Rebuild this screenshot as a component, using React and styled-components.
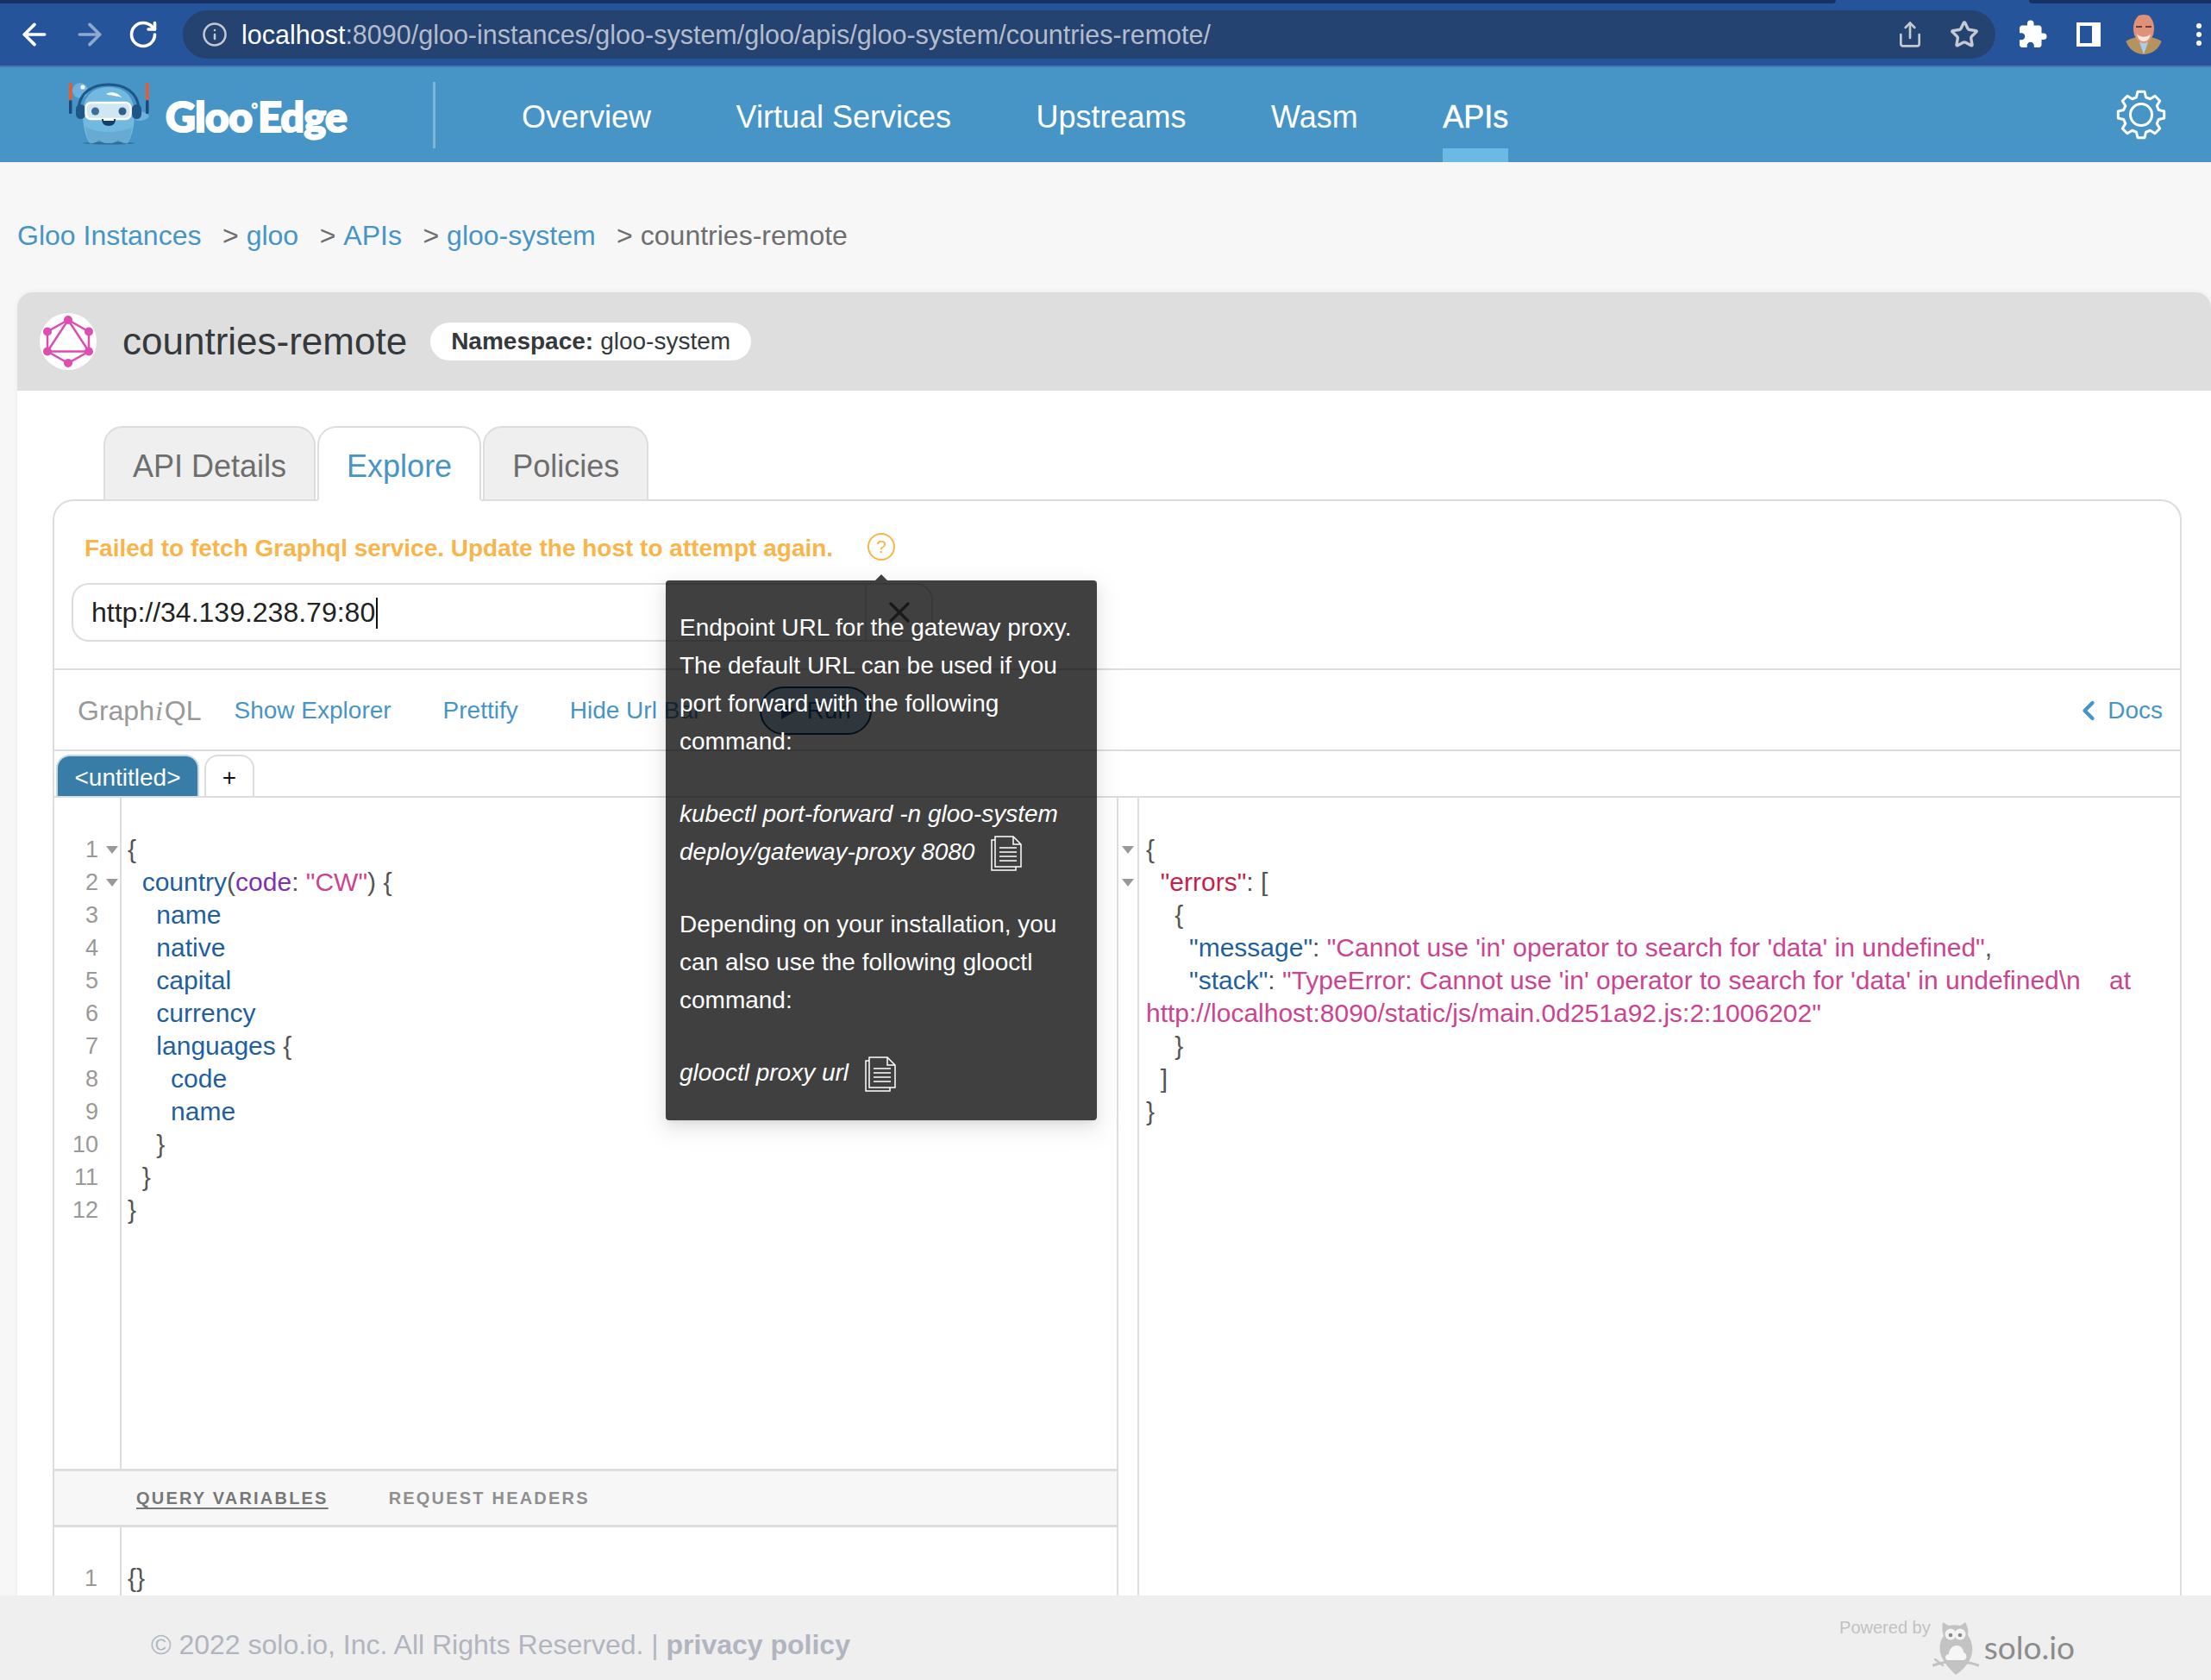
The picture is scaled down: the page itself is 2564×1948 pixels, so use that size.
import React from "react";
import styled, { createGlobalStyle } from "styled-components";
import { ArrowLeft, ArrowRight, RotateCw, Info, Share, Star, X, ChevronLeft } from "lucide-react";
import { MdExtension } from "react-icons/md";

const GlobalStyle = createGlobalStyle`
  * { box-sizing: border-box; }
  html, body { margin: 0; padding: 0; background: #f7f7f7; }
  body { font-family: "Liberation Sans", Arial, sans-serif; }
`;

const Page = styled.div`
  width: 2564px;
  height: 1948px;
  display: flex;
  flex-direction: column;
  overflow: hidden;
  background: #f7f7f7;
`;

/* browser chrome */
const ChromeBar = styled.div`
  position: relative;
  flex: none;
  height: 78px;
  background: #26549a;
  border-bottom: 2px solid #4a75ae;
  padding: 12px 0 8px;
  display: flex;
  align-items: stretch;
`;
const TabEdge = styled.div`
  position: absolute;
  top: 0;
  left: ${(p) => (p.$side === "left" ? "0" : "2353px")};
  width: ${(p) => (p.$side === "left" ? "2129px" : "211px")};
  height: 4px;
  background: #163163;
  border-radius: ${(p) => (p.$side === "left" ? "0 0 6px 0" : "0 0 0 6px")};
`;
const NavIcons = styled.div`
  width: 212px;
  display: flex;
  align-items: center;
  padding-left: 20px;
  gap: 24px;
  color: #fff;
`;
const Dimmed = styled.span`
  display: flex;
  color: #8ea8d0;
`;
const AddressPill = styled.div`
  width: 2102px;
  background: #244371;
  border-radius: 28px;
  display: flex;
  align-items: center;
  padding: 0 0 0 22px;
  color: #c4c9d2;
`;
const AddressText = styled.div`
  margin-left: 16px;
  font-size: 30.5px;
  color: #b4bccb;
  white-space: nowrap;
  flex: 1;
`;
const Host = styled.span`
  color: #fff;
`;
const PillIcons = styled.div`
  display: flex;
  align-items: center;
  gap: 30px;
  padding-right: 19px;
`;
const ExtIcons = styled.div`
  flex: 1;
  display: flex;
  align-items: center;
  color: #fff;
  padding-left: 25px;
`;
const SideSlot = styled.span`
  display: flex;
  margin: 0 28px 0 33px;
`;
const Dots = styled.div`
  margin-left: 39px;
  display: flex;
  flex-direction: column;
  gap: 4px;
`;
const Dot = styled.span`
  width: 6px;
  height: 6px;
  border-radius: 50%;
  background: #fff;
`;

/* app header */
const Header = styled.header`
  flex: none;
  height: 110px;
  background: #4795c6;
  display: flex;
  align-items: stretch;
  padding-left: 74px;
`;
const LogoBox = styled.div`
  width: 428px;
  display: flex;
  align-items: center;
  flex: none;
  padding-bottom: 4px;
`;
const LogoText = styled.div`
  margin-left: 8px;
  font-family: Lato, "Liberation Sans", sans-serif;
  font-weight: 900;
  font-size: 48px;
  letter-spacing: -0.5px;
  color: #fff;
  -webkit-text-stroke: 2.2px #fff;
  white-space: nowrap;
  line-height: 1;
  padding-top: 8px;
`;
const LogoMark = styled.sup`
  font-size: 18px;
  vertical-align: 20px;
  line-height: 0;
  margin: 0 1px 0 -1px;
  -webkit-text-stroke: 0.6px #fff;
`;
const HeaderDivider = styled.div`
  width: 3px;
  height: 77px;
  margin-top: 17px;
  background: #7fb5d9;
  flex: none;
`;
const Nav = styled.nav`
  display: flex;
  margin-left: 100px;
  gap: 98.5px;
  flex: 1;
`;
const NavItem = styled.a`
  font-size: 36px;
  line-height: 116px;
  color: #fff;
  position: relative;
  white-space: nowrap;
  ${(p) =>
    p.$active &&
    `-webkit-text-stroke: 0.5px #fff;
    &::after {
      content: "";
      position: absolute;
      left: 0;
      right: 0;
      top: 94px;
      height: 16px;
      background: #6cb9e6;
    }`}
`;
const GearBox = styled.div`
  flex: none;
  margin-right: 51px;
  margin-top: 25px;
`;

/* main */
const Main = styled.main`
  flex: 1;
  min-height: 0;
  overflow: hidden;
  padding: 64px 0 0 20px;
`;
const Breadcrumb = styled.div`
  display: flex;
  font-size: 32px;
  line-height: 42px;
  color: #6e6e6e;
  margin-bottom: 45px;
`;
const Crumb = styled.span`
  color: ${(p) => (p.$link ? "#4795c6" : "#6e6e6e")};
  margin-left: ${(p) => (p.$first ? "0" : "9px")};
`;
const Sep = styled.span`
  margin-left: ${(p) => p.$gap}px;
`;
const Card = styled.section`
  background: #fff;
  border-radius: 18px 18px 0 0;
  box-shadow: 0 0 6px rgba(0, 0, 0, 0.06);
`;
const CardHead = styled.div`
  height: 114px;
  background: #dedede;
  border-radius: 18px 18px 0 0;
  display: flex;
  align-items: center;
  padding-left: 26px;
`;
const IconCircle = styled.div`
  width: 66px;
  height: 66px;
  border-radius: 50%;
  background: #fff;
  display: flex;
  align-items: center;
  justify-content: center;
  flex: none;
`;
const Title = styled.h1`
  margin: 0 27px 0 30px;
  font-size: 44px;
  font-weight: 400;
  color: #35393b;
  white-space: nowrap;
`;
const NsPill = styled.div`
  height: 44px;
  padding: 0 24px;
  border-radius: 22px;
  background: #fff;
  display: flex;
  align-items: center;
  font-size: 28px;
  color: #35393b;
  white-space: nowrap;
  gap: 8px;
`;
const NsLabel = styled.b`
  font-weight: 700;
`;
const Tabs = styled.div`
  display: flex;
  gap: 2px;
  margin: 41px 0 -2px 100px;
  position: relative;
  z-index: 1;
`;
const Tab = styled.div`
  height: 87px;
  padding: 0 32px;
  font-size: 36px;
  line-height: 90px;
  border: 2px solid #ddd;
  border-bottom: ${(p) => (p.$active ? "2px solid #fff" : "2px solid #ddd")};
  border-radius: 22px 22px 0 0;
  background: ${(p) => (p.$active ? "#fff" : "#efefef")};
  color: ${(p) => (p.$active ? "#4795c6" : "#6e6e6e")};
  white-space: nowrap;
`;
const Panel = styled.div`
  position: relative;
  margin: 0 34px 0 41px;
  border: 2px solid #ddd;
  border-radius: 24px 24px 0 0;
  background: #fff;
`;
const WarnRow = styled.div`
  display: flex;
  align-items: center;
  height: 36px;
  margin: 37px 0 22px 35px;
`;
const WarnText = styled.div`
  font-size: 28px;
  font-weight: 700;
  color: #f9b54a;
  white-space: nowrap;
`;
const HelpIcon = styled.div`
  margin-left: 40px;
  margin-top: -4px;
  width: 32px;
  height: 32px;
  border: 2px solid #f9b54a;
  border-radius: 50%;
  color: #f9b54a;
  font-size: 21px;
  line-height: 28px;
  text-align: center;
`;
const UrlRow = styled.div`
  display: flex;
  margin: 0 0 31px 20px;
  height: 68px;
`;
const UrlInput = styled.div`
  width: 920px;
  height: 68px;
  border: 2px solid #ddd;
  border-right: 0;
  border-radius: 20px 0 0 20px;
  display: flex;
  align-items: center;
  padding-left: 21px;
  font-size: 32px;
  padding-top: 1px;
  color: #222;
`;
const Caret = styled.span`
  width: 2px;
  height: 36px;
  background: #111;
  margin-left: 1px;
`;
const UrlButton = styled.div`
  width: 79px;
  height: 68px;
  border: 2px solid #ddd;
  border-radius: 0 20px 20px 0;
  display: flex;
  align-items: center;
  justify-content: center;
  color: #666;
`;
const Toolbar = styled.div`
  height: 96px;
  border-top: 2px solid #ddd;
  border-bottom: 2px solid #ddd;
  display: flex;
  align-items: center;
  padding: 2px 20px 0 27px;
`;
const Brand = styled.div`
  font-size: 32px;
  color: #999;
  margin-right: 38px;
  white-space: nowrap;
`;
const BrandI = styled.em`
  font-family: "Liberation Serif", serif;
  margin: 0 2px 0 1px;
`;
const ToolLink = styled.a`
  font-size: 28px;
  color: #4795c6;
  margin-right: 60px;
  white-space: nowrap;
`;
const RunButton = styled.div`
  width: 130px;
  height: 56px;
  margin-left: 8px;
  border: 2px solid #0c3f66;
  border-radius: 28px;
  background: #bcdaee;
  display: flex;
  align-items: center;
  justify-content: center;
  gap: 12px;
  font-size: 28px;
  color: #1c5a86;
`;
const RunArrow = styled.span`
  width: 0;
  height: 0;
  border-left: 18px solid #1c5a86;
  border-top: 10px solid transparent;
  border-bottom: 10px solid transparent;
`;
const DocsLink = styled.a`
  margin-left: auto;
  display: flex;
  align-items: center;
  gap: 4px;
  font-size: 28px;
  color: #4795c6;
`;
const SessionStrip = styled.div`
  height: 54px;
  border-bottom: 2px solid #ddd;
  display: flex;
  align-items: flex-end;
  padding-left: 2px;
  gap: 6px;
`;
const SessionTab = styled.div`
  height: 48px;
  width: ${(p) => (p.$active ? "166px" : "58px")};
  text-align: center;
  border-radius: 16px 16px 0 0;
  border: 2px solid #ddd;
  border-bottom: 0;
  background: ${(p) => (p.$active ? "#387ca8" : "#fff")};
  border-color: ${(p) => (p.$active ? "#c5d8e4" : "#ddd")};
  color: ${(p) => (p.$active ? "#fff" : "#111")};
  font-size: 28px;
  line-height: 49px;
  white-space: nowrap;
`;
const Workspace = styled.div`
  display: flex;
  align-items: stretch;
`;
const LeftPane = styled.div`
  width: 1232px;
  flex: none;
`;
const EditorArea = styled.div`
  display: flex;
  height: ${(p) => p.$h}px;
  padding-top: 0;
`;
const Gutter = styled.div`
  width: 78px;
  flex: none;
  border-right: 2px solid #ddd;
  padding-top: ${(p) => p.$top}px;
  overflow: hidden;
`;
const GutterRow = styled.div`
  height: 38px;
  display: flex;
  align-items: center;
  justify-content: flex-end;
  font-size: 27px;
  color: #999;
  padding-right: ${(p) => p.$pad}px;
`;
const FoldSlot = styled.span`
  width: 14px;
  margin-left: 9px;
  flex: none;
`;
const Fold = styled.span`
  display: block;
  width: 0;
  height: 0;
  border-left: 7px solid transparent;
  border-right: 7px solid transparent;
  border-top: 9px solid #999;
`;
const Code = styled.div`
  flex: 1;
  min-width: 0;
  padding: ${(p) => p.$top}px 0 0 ${(p) => p.$left}px;
  font-size: 30px;
  color: #555;
`;
const CodeLine = styled.div`
  line-height: 38px;
  min-height: 38px;
  white-space: pre-wrap;
`;
const TOKEN = { p: "#1f5f9f", a: "#7f30b2", s: "#cc4490", d: "#c81f4a", x: "#555" };
const Tok = styled.span`
  color: ${(p) => TOKEN[p.$k]};
`;
const VarBar = styled.div`
  height: 68px;
  background: #f7f7f7;
  border-top: 3px solid #ddd;
  border-bottom: 3px solid #ddd;
  display: flex;
  align-items: center;
  padding: 1px 0 0 95px;
  gap: 70px;
`;
const VarTab = styled.div`
  font-size: 20px;
  font-weight: 700;
  letter-spacing: 2.2px;
  color: ${(p) => (p.$active ? "#777" : "#8f8f8f")};
  text-decoration: ${(p) => (p.$active ? "underline" : "none")};
  text-underline-offset: 4px;
  white-space: nowrap;
`;
const DragBar = styled.div`
  width: 26px;
  flex: none;
  border-left: 2px solid #ddd;
  border-right: 2px solid #ddd;
  padding-top: 41px;
  display: flex;
  flex-direction: column;
`;
const DragFold = styled.div`
  height: 38px;
  display: flex;
  align-items: center;
  justify-content: center;
`;
const ResultPane = styled.div`
  flex: 1;
  min-width: 0;
`;

/* tooltip */
const Tooltip = styled.div`
  position: absolute;
  top: 92px;
  left: 709px;
  width: 500px;
  padding: 33px 16px;
  border-radius: 4px;
  background: rgba(0, 0, 0, 0.75);
  box-shadow: 0 3px 6px -4px rgba(0, 0, 0, 0.12), 0 6px 16px rgba(0, 0, 0, 0.08),
    0 9px 28px 8px rgba(0, 0, 0, 0.05);
  color: #fff;
  font-size: 28px;
  line-height: 44px;
  z-index: 5;
  &::before {
    content: "";
    position: absolute;
    top: -7px;
    left: 243px;
    border-left: 7px solid transparent;
    border-right: 7px solid transparent;
    border-bottom: 7px solid rgba(0, 0, 0, 0.75);
  }
`;
const TipPara = styled.p`
  margin: 0 0 40px;
  &:last-child {
    margin-bottom: 0;
  }
`;
const TipCode = styled.i`
  font-style: italic;
`;
const CopyWrap = styled.span`
  display: inline-block;
  vertical-align: middle;
  margin-left: 19px;
  line-height: 0;
`;

/* footer */
const Footer = styled.footer`
  position: relative;
  z-index: 6;
  flex: none;
  height: 98px;
  background: #efefef;
  display: flex;
  align-items: center;
  justify-content: space-between;
  padding: 0 158px 0 175px;
`;
const FootText = styled.div`
  font-size: 32px;
  color: #b1b5bf;
  white-space: nowrap;
  margin-top: 16px;
`;
const FootStrong = styled.b`
  font-weight: 700;
`;
const Powered = styled.div`
  display: flex;
  align-items: flex-start;
  height: 98px;
`;
const PoweredLabel = styled.div`
  font-size: 20px;
  color: #c2c2c2;
  margin-top: 26px;
  white-space: nowrap;
`;
const OwlBox = styled.div`
  margin: 30px 6px 0 2px;
  line-height: 0;
`;
const SoloText = styled.div`
  font-family: Lato, "Open Sans", sans-serif;
  font-size: 37px;
  font-weight: 400;
  color: #8c8c8c;
  margin-top: 37px;
  line-height: 46px;
`;

/* drawings */
const Mascot = () => (
  <svg width="110" height="78" viewBox="75 93 110 78" aria-hidden="true">
    <ellipse cx="127" cy="167" rx="30" ry="1.5" fill="#2f6f9d" />
    <circle cx="94" cy="106" r="9" fill="#6cb2dc" />
    <circle cx="97" cy="102" r="2.6" fill="#fff" />
    <path d="M160 130c8 0 12 2 14 6-4 5-10 6-16 4z" fill="#6cb2dc" />
    <path d="M97 134c0-22 12-32 30-32s30 10 30 32c0 14-4 28-8 33-5 1-8-2-11-4-3 3-7 4-11 4s-8-1-11-4c-3 2-6 5-11 4-4-5-8-19-8-33z" fill="#72b9df" />
    <path d="M100 148c8 4 18 6 27 6s20-2 27-6c-1 8-3 15-5 19-5 1-8-2-11-4-3 3-7 4-11 4s-8-1-11-4c-3 2-6 5-11 4-2-4-4-11-5-19z" fill="#67abd2" />
    <path d="M92 126c2-18 16-27 35-27s33 9 35 27" fill="none" stroke="#1f5688" strokeWidth="3" />
    <rect x="89" y="122" width="11" height="17" rx="5.500" fill="#1f5688" />
    <rect x="154" y="122" width="11" height="17" rx="5.500" fill="#1f5688" />
    <path d="M124 110c4-3 14-2 18 4-5-2-13-2-18-4z" fill="#fff" />
    <rect x="100.500" y="120" width="52" height="19" rx="6" fill="#cfe6f3" stroke="#fff" strokeWidth="2.500" />
    <circle cx="111.500" cy="130" r="4.500" fill="#3f6f96" />
    <circle cx="143" cy="130" r="4.500" fill="#2f6088" />
    <path d="M119 139h16c0 5-3 8-8 8s-8-3-8-8z" fill="#123f68" />
    <path d="M121 139h12v2h-12z" fill="#fff" />
    <rect x="81" y="97" width="3.500" height="20" rx="1.500" fill="#ef5a28" />
    <rect x="81" y="117" width="3.500" height="16" rx="1.500" fill="#1c4a78" />
    <rect x="170" y="97" width="3.500" height="20" rx="1.500" fill="#ef5a28" />
    <rect x="170" y="117" width="3.500" height="16" rx="1.500" fill="#1c4a78" />
  </svg>
);

const gearPath = () => {
  const cx = 30;
  const cy = 30;
  const teeth = 8;
  const pts = [];
  for (let i = 0; i < teeth; i++) {
    const a = (i / teeth) * Math.PI * 2 - Math.PI / 2;
    const step = (Math.PI * 2) / teeth;
    const list = [
      [21, a - step * 0.34],
      [27, a - step * 0.19],
      [27, a + step * 0.19],
      [21, a + step * 0.34],
    ];
    list.forEach(([r, t]) => pts.push(`${(cx + r * Math.cos(t)).toFixed(2)} ${(cy + r * Math.sin(t)).toFixed(2)}`));
  }
  return `M${pts.join("L")}Z`;
};

const Gear = () => (
  <svg width="60" height="60" viewBox="0 0 60 60" fill="none" stroke="#fff" strokeWidth="3" strokeLinejoin="round" aria-hidden="true">
    <path d={gearPath()} />
    <circle cx="30" cy="30" r="12.500" />
  </svg>
);

const GraphqlIcon = () => (
  <svg width="58" height="62" viewBox="0 0 58 62" fill="none" stroke="#de4eb0" strokeWidth="2.500" aria-hidden="true">
    <path d="M29 6L53 19.500V42.500L29 56L5 42.500V19.500Z" />
    <path d="M29 6L53 42.500H5Z" />
    <g fill="#de4eb0" stroke="none">
      <circle cx="29" cy="6" r="5" />
      <circle cx="53" cy="19.500" r="5" />
      <circle cx="53" cy="42.500" r="5" />
      <circle cx="29" cy="56" r="5" />
      <circle cx="5" cy="42.500" r="5" />
      <circle cx="5" cy="19.500" r="5" />
    </g>
  </svg>
);

const CopyIcon = () => (
  <svg width="36" height="41" viewBox="0 0 36 41" fill="none" stroke="#fff" strokeWidth="1.500" aria-hidden="true">
    <path d="M5 5H1V40H29V36" />
    <path d="M5 1H26L35 10V36H5Z" />
    <path d="M26 1V10H35" />
    <path d="M10 14H30M10 19H30M10 24H30M10 29H30" />
  </svg>
);

const SidePanelIcon = () => (
  <svg width="28" height="28" viewBox="0 0 28 28" aria-hidden="true">
    <path fillRule="evenodd" fill="#fff" d="M0 0H28V28H0ZM4 4V24H18V4Z" />
  </svg>
);

const Avatar = () => (
  <svg width="44" height="46" viewBox="0 0 44 46" aria-hidden="true">
    <defs>
      <clipPath id="avatar-clip">
        <ellipse cx="22" cy="23" rx="22" ry="23" />
      </clipPath>
    </defs>
    <g clipPath="url(#avatar-clip)">
      <rect width="44" height="46" fill="#26549a" />
      <path d="M0 46V32c6-5 12-6 22-6s16 1 22 6v14z" fill="#b5935f" />
      <path d="M17 32l5 14 5-14z" fill="#a9cdea" />
      <ellipse cx="22" cy="16" rx="12" ry="17" fill="#e0917a" />
      <path d="M14 22c3 5 13 5 16 0-1 6-4 9-8 9s-7-3-8-9z" fill="#f4e6dc" />
      <rect x="13" y="13" width="7" height="2" fill="#6b3d33" />
      <rect x="24" y="13" width="7" height="2" fill="#6b3d33" />
    </g>
  </svg>
);

const Owl = () => (
  <svg width="54" height="62" viewBox="0 0 54 62" aria-hidden="true">
    <path d="M12 1c3 2 5 3 7 4 4-1 9-1 13 0 2-1 4-2 6-4 3 5 4 11 3 15 4 5 6 13 5 20-1 8-7 18-19 26-7-7-12-12-16-20-4-9-3-19 2-25-2-5-2-10-1-16z" fill="#c3c3c3" />
    <circle cx="21" cy="15" r="6.500" fill="#f4f4f4" />
    <circle cx="32" cy="15" r="6.500" fill="#f4f4f4" />
    <circle cx="21" cy="16" r="2.300" fill="#8a8a8a" />
    <circle cx="32" cy="16" r="2.300" fill="#8a8a8a" />
    <path d="M18 45c-4 0-4-7 1-7 0-5 4-10 9-10s8 4 8 8c4 0 5 9 0 9z" fill="#f6f6f6" />
    <path d="M1 51c16-6 36-6 52 0" fill="none" stroke="#c3c3c3" strokeWidth="3" strokeLinecap="round" />
    <path d="M3 44l9 7" fill="none" stroke="#c3c3c3" strokeWidth="2.500" strokeLinecap="round" />
  </svg>
);

const queryLines = [
  [["x", "{"]],
  [["x", "  "], ["p", "country"], ["x", "("], ["a", "code"], ["x", ": "], ["s", '"CW"'], ["x", ") {"]],
  [["p", "    name"]],
  [["p", "    native"]],
  [["p", "    capital"]],
  [["p", "    currency"]],
  [["p", "    languages"], ["x", " {"]],
  [["p", "      code"]],
  [["p", "      name"]],
  [["x", "    }"]],
  [["x", "  }"]],
  [["x", "}"]],
];

const resultLines = [
  [["x", "{"]],
  [["x", "  "], ["d", '"errors"'], ["x", ": ["]],
  [["x", "    {"]],
  [["x", "      "], ["p", '"message"'], ["x", ": "], ["s", `"Cannot use 'in' operator to search for 'data' in undefined"`], ["x", ","]],
  [
    ["x", "      "],
    ["p", '"stack"'],
    ["x", ": "],
    ["s", `"TypeError: Cannot use 'in' operator to search for 'data' in undefined\\n    at http://localhost:8090/static/js/main.0d251a92.js:2:1006202"`],
  ],
  [["x", "    }"]],
  [["x", "  ]"]],
  [["x", "}"]],
];

const renderLines = (lines) =>
  lines.map((line, i) => (
    <CodeLine key={i}>
      {line.map(([k, text], j) => (
        <Tok key={j} $k={k}>
          {text}
        </Tok>
      ))}
    </CodeLine>
  ));

export default function App() {
  return (
    <Page>
      <GlobalStyle />
      <ChromeBar>
        <TabEdge $side="left" />
        <TabEdge $side="right" />
        <NavIcons>
          <ArrowLeft size={40} strokeWidth={2.2} />
          <Dimmed>
            <ArrowRight size={40} strokeWidth={2.2} />
          </Dimmed>
          <RotateCw size={36} strokeWidth={2.4} />
        </NavIcons>
        <AddressPill>
          <Info size={30} strokeWidth={2} />
          <AddressText>
            <Host>localhost</Host>:8090/gloo-instances/gloo-system/gloo/apis/gloo-system/countries-remote/
          </AddressText>
          <PillIcons>
            <Share size={32} strokeWidth={2} />
            <Star size={34} strokeWidth={2.4} />
          </PillIcons>
        </AddressPill>
        <ExtIcons>
          <MdExtension size={36} />
          <SideSlot>
            <SidePanelIcon />
          </SideSlot>
          <Avatar />
          <Dots>
            <Dot />
            <Dot />
            <Dot />
          </Dots>
        </ExtIcons>
      </ChromeBar>

      <Header>
        <LogoBox>
          <Mascot />
          <LogoText>
            Gloo<LogoMark>°</LogoMark>Edge
          </LogoText>
        </LogoBox>
        <HeaderDivider />
        <Nav>
          <NavItem>Overview</NavItem>
          <NavItem>Virtual Services</NavItem>
          <NavItem>Upstreams</NavItem>
          <NavItem>Wasm</NavItem>
          <NavItem $active>APIs</NavItem>
        </Nav>
        <GearBox>
          <Gear />
        </GearBox>
      </Header>

      <Main>
        <Breadcrumb>
          <Crumb $link $first>Gloo Instances</Crumb>
          <Sep $gap={24.5}>&gt;</Sep>
          <Crumb $link>gloo</Crumb>
          <Sep $gap={24.5}>&gt;</Sep>
          <Crumb $link>APIs</Crumb>
          <Sep $gap={24.5}>&gt;</Sep>
          <Crumb $link>gloo-system</Crumb>
          <Sep $gap={24.5}>&gt;</Sep>
          <Crumb>countries-remote</Crumb>
        </Breadcrumb>

        <Card>
          <CardHead>
            <IconCircle>
              <GraphqlIcon />
            </IconCircle>
            <Title>countries-remote</Title>
            <NsPill>
              <NsLabel>Namespace:</NsLabel> gloo-system
            </NsPill>
          </CardHead>

          <Tabs>
            <Tab>API Details</Tab>
            <Tab $active>Explore</Tab>
            <Tab>Policies</Tab>
          </Tabs>

          <Panel>
            <WarnRow>
              <WarnText>Failed to fetch Graphql service. Update the host to attempt again.</WarnText>
              <HelpIcon>?</HelpIcon>
            </WarnRow>
            <Tooltip>
              <TipPara>
                Endpoint URL for the gateway proxy. The default URL can be used if you port forward with the following command:
              </TipPara>
              <TipPara>
                <TipCode>kubectl port-forward -n gloo-system deploy/gateway-proxy 8080</TipCode>
                <CopyWrap>
                  <CopyIcon />
                </CopyWrap>
              </TipPara>
              <TipPara>Depending on your installation, you can also use the following glooctl command:</TipPara>
              <TipPara>
                <TipCode>glooctl proxy url</TipCode>
                <CopyWrap>
                  <CopyIcon />
                </CopyWrap>
              </TipPara>
            </Tooltip>

            <UrlRow>
              <UrlInput>
                http://34.139.238.79:80
                <Caret />
              </UrlInput>
              <UrlButton>
                <X size={40} strokeWidth={2} />
              </UrlButton>
            </UrlRow>

            <Toolbar>
              <Brand>
                Graph<BrandI>i</BrandI>QL
              </Brand>
              <ToolLink>Show Explorer</ToolLink>
              <ToolLink>Prettify</ToolLink>
              <ToolLink>Hide Url Bar</ToolLink>
              <RunButton>
                <RunArrow />
                Run
              </RunButton>
              <DocsLink>
                <ChevronLeft size={36} strokeWidth={2.8} />
                Docs
              </DocsLink>
            </Toolbar>

            <SessionStrip>
              <SessionTab $active>&lt;untitled&gt;</SessionTab>
              <SessionTab>+</SessionTab>
            </SessionStrip>

            <Workspace>
              <LeftPane>
                <EditorArea $h={778}>
                  <Gutter $top={41}>
                    {queryLines.map((_, i) => (
                      <GutterRow key={i} $pad={2}>
                        {i + 1}
                        <FoldSlot>{i < 2 && <Fold />}</FoldSlot>
                      </GutterRow>
                    ))}
                  </Gutter>
                  <Code $top={41} $left={7}>{renderLines(queryLines)}</Code>
                </EditorArea>
                <VarBar>
                  <VarTab $active>QUERY VARIABLES</VarTab>
                  <VarTab>REQUEST HEADERS</VarTab>
                </VarBar>
                <EditorArea $h={140}>
                  <Gutter $top={40}>
                    <GutterRow $pad={26}>1</GutterRow>
                  </Gutter>
                  <Code $top={40} $left={7}>
                    <CodeLine>{"{}"}</CodeLine>
                  </Code>
                </EditorArea>
              </LeftPane>
              <DragBar>
                <DragFold>
                  <Fold />
                </DragFold>
                <DragFold>
                  <Fold />
                </DragFold>
              </DragBar>
              <ResultPane>
                <Code $top={41} $left={8}>{renderLines(resultLines)}</Code>
              </ResultPane>
            </Workspace>
          </Panel>
        </Card>
      </Main>

      <Footer>
        <FootText>
          © 2022 solo.io, Inc. All Rights Reserved. | <FootStrong>privacy policy</FootStrong>
        </FootText>
        <Powered>
          <PoweredLabel>Powered by</PoweredLabel>
          <OwlBox>
            <Owl />
          </OwlBox>
          <SoloText>solo.io</SoloText>
        </Powered>
      </Footer>
    </Page>
  );
}
